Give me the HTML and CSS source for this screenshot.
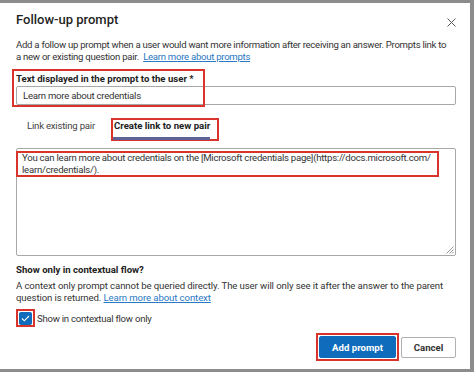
FILE: index.html
```html
<!DOCTYPE html>
<html>
<head>
<meta charset="utf-8">
<link rel="stylesheet" href="styles.css">
</head>
<body>
<div class="backdrop">
  <div class="dialog">
    <div class="header">
      <h1 class="title">Follow-up prompt</h1>
      <svg class="close" width="9" height="9" viewBox="0 0 9 9"><path d="M0.5 0.5 L8.5 8.5 M8.5 0.5 L0.5 8.5" stroke="#555" stroke-width="1" fill="none"/></svg>
    </div>
    <p class="desc desc1">Add a follow up prompt when a user would want more information after receiving an answer. Prompts link to<br>a new or existing question pair. &nbsp;<a class="link">Learn more about prompts</a></p>

    <div class="field">
      <div class="hl hl-label"></div>
      <label class="label">Text displayed in the prompt to the user *</label>
      <div class="input">Learn more about credentials</div>
    </div>

    <div class="tabs">
      <div class="tab">Link existing pair</div>
      <div class="tab active">Create link to new pair<div class="hl hl-tab"></div></div>
    </div>

    <div class="textarea">
      <div class="ta-text">You can learn more about credentials on the [Microsoft credentials page](https://docs.microsoft.com/<br>learn/credentials/).<div class="hl hl-text"></div></div>
      <svg class="grip" width="8" height="8" viewBox="0 0 8 8"><path d="M7.5 0.5 L0.5 7.5 M7.5 3.5 L3.5 7.5 M7.5 6 L6 7.5" stroke="#999" stroke-width="1"/></svg>
    </div>

    <h2 class="subtitle">Show only in contextual flow?</h2>
    <p class="desc desc2">A context only prompt cannot be queried directly. The user will only see it after the answer to the parent<br>question is returned. <a class="link">Learn more about context</a></p>

    <div class="check-row">
      <div class="check-wrap">
        <div class="checkbox"><svg width="9" height="7" viewBox="0 0 9 7"><path d="M1 3.5 L3.3 5.8 L8 1" stroke="#fff" stroke-width="1.1" fill="none"/></svg></div>
      </div>
      <span class="check-label">Show in contextual flow only</span>
    </div>

    <div class="footer">
      <div class="btn-wrap"><button class="btn primary">Add prompt</button></div>
      <button class="btn secondary">Cancel</button>
    </div>
  </div>
</div>
</body>
</html>
```

FILE: styles.css
```css
* { box-sizing: border-box; }
html, body { margin: 0; padding: 0; }
body {
  width: 474px; height: 372px; overflow: hidden;
  background: #8c8c8c;
  font-family: Roboto, "Liberation Sans", Arial, sans-serif;
  color: #333;
}
.backdrop { padding: 3px 4px 0 0; height: 372px; }
.dialog {
  background: #fff;
  height: 366px;
  padding: 8px 14px 0 16px;
  position: relative;
}
.header { display: flex; justify-content: space-between; align-items: center; height: 18px; }
.title { margin: 0; font-size: 13px; font-weight: 500; color: #1f1f1f; line-height: 18px; }
.close { margin-right: 0px; margin-top: 4px; }
.desc { margin: 10px 0 0; font-size: 9.6px; line-height: 11.5px; color: #333; white-space: nowrap; }
.desc1 { letter-spacing: -0.28px; }
.link { color: #2a79c4; text-decoration: underline; }
.field { position: relative; margin-top: 11px; }
.hl { position: absolute; border: 2px solid #d9342b; pointer-events: none; }
.hl-label { left: -4px; top: -4px; width: 193px; height: 38px; }
.label { display: block; font-size: 9.6px; font-weight: 700; color: #222; line-height: 12px; }
.input {
  margin-top: 1px; height: 19px; border: 1px solid #a8a8a8; border-radius: 2px;
  font-size: 9.6px; line-height: 17px; padding: 0 6px; color: #333; letter-spacing: -0.25px;
}
.tabs { display: flex; margin-top: 15px; gap: 19px; padding-left: 11px; }
.tab { font-size: 9.6px; color: #444; line-height: 12px; position: relative; height: 20px; letter-spacing: -0.22px; }
.tab.active { font-weight: 700; color: #222; letter-spacing: 0; }
.tab.active::after {
  content: ""; position: absolute; left: -1px; right: 0px; bottom: 0; height: 3px; background: #5f6199;
}
.hl-tab { left: -3px; top: -2px; right: -9px; bottom: -1px; }
.textarea {
  margin-top: 8px; height: 108px; border: 1px solid #a8a8a8; border-radius: 2px;
  position: relative; padding: 3px 0 0 5px;
}
.ta-text { font-size: 9.6px; line-height: 12px; color: #333; position: relative; white-space: nowrap; letter-spacing: -0.25px; }
.hl-text { left: -6px; top: -1px; width: 423px; height: 26px; }
.grip { position: absolute; right: 1px; bottom: 1px; }
.subtitle { margin: 8px 0 0; font-size: 9.6px; font-weight: 700; color: #222; line-height: 12px; }
.desc2 { margin-top: 4px; line-height: 12px; letter-spacing: -0.1px; }
.check-row { display: flex; align-items: center; margin-top: 5px; gap: 2px; }
.check-wrap { border: 2px solid #d9342b; width: 19px; height: 18px; display: flex; align-items: center; justify-content: center; }
.checkbox { width: 13px; height: 13px; background: #0f6cbd; border-radius: 2px; display: flex; align-items: center; justify-content: center; }
.check-label { font-size: 9.6px; color: #333; letter-spacing: -0.25px; }
.footer { display: flex; justify-content: flex-end; align-items: center; gap: 2px; margin-top: 6px; }
.btn-wrap { border: 2px solid #d9342b; padding: 1px; display: flex; }
.btn {
  font-family: inherit; font-size: 9.6px; font-weight: 700; border-radius: 2px; cursor: pointer; padding: 0;
}
.primary { background: #0f6cbd; color: #fff; border: 1px solid #0f6cbd; width: 77px; height: 22px; }
.secondary { background: #fff; color: #333; border: 1px solid #b0b0b0; width: 55px; height: 21px; }
```
